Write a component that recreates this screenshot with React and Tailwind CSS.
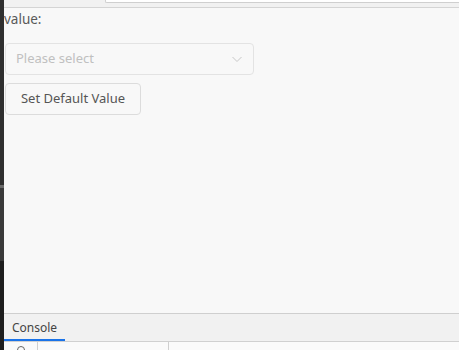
import React from "react";

export default function App() {
  return (
    <div
      className="flex h-[350px] w-[459px] overflow-hidden bg-[#f8f8f8] text-[#333]"
      style={{ fontFamily: '"Noto Sans", "Open Sans", sans-serif' }}
    >
      {/* dark editor strip on the left */}
      <div className="flex w-[4px] shrink-0 flex-col">
        <div className="h-[185px] bg-[#2f2f2f]" />
        <div className="h-[3px] bg-[#6a6a6a]" />
        <div className="h-[73px] bg-[#3a3a3a]" />
        <div className="flex-1 bg-[#1e1e1e]" />
      </div>

      <div className="flex min-w-0 flex-1 flex-col">
        {/* top toolbar edge */}
        <div className="relative h-[8px] shrink-0 border-b border-[#d4d4d4] bg-[#f1f1f1]">
          <div className="absolute left-[101px] right-0 top-0 h-[3px] rounded-bl-[2px] border-b border-l border-[#cfcfcf] bg-white" />
        </div>

        <div className="flex-1">
          <div className="mt-[2px] text-[13.5px] leading-[18px] text-[#5a5a5a]">value:</div>

          <div className="ml-[1px] mt-[15px] flex h-[32px] w-[249px] items-center justify-between rounded-[4px] border border-[#e3e3e3] bg-[#f8f8f8] pl-[10px] pr-[10px]">
            <span className="text-[13px] text-[#c0c0c0]">Please select</span>
            <svg width="12" height="12" viewBox="0 0 12 12" fill="none">
              <path d="M1.5 4l4.5 4.5L10.5 4" stroke="#c8c8c8" strokeWidth="1" />
            </svg>
          </div>

          <div className="ml-[1px] mt-[8px] flex h-[32px] w-[136px] items-center justify-center rounded-[4px] border border-[#dcdcdc] bg-[#f8f8f8] text-[13px] text-[#555]">
            Set Default Value
          </div>
        </div>

        {/* console panel */}
        <div className="h-[37px] shrink-0 border-t border-[#cfcfcf] bg-[#f1f1f1]">
          <div className="flex h-[28px] border-b border-[#d0d0d0]">
            <div className="flex w-[61px] items-center justify-center border-b-2 border-[#1a73e8] pt-[2px] text-[12px] text-[#444]">
              Console
            </div>
          </div>
          <div className="flex h-[8px] bg-[#fafafa]">
            <div className="relative w-[34px] border-r border-[#cfcfcf]">
              <div className="absolute left-[13px] top-[4px] h-[8px] w-[8px] rounded-full border border-[#666]" />
            </div>
            <div className="w-[131px] border-r border-[#cfcfcf]" />
          </div>
        </div>
      </div>
    </div>
  );
}
